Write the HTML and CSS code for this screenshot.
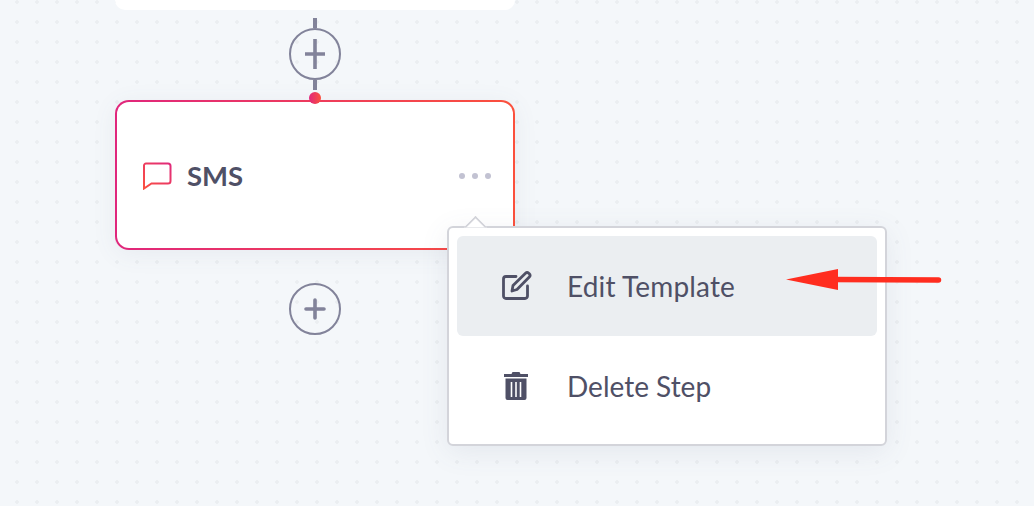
FILE: index.html
```html
<!DOCTYPE html>
<html lang="en">

<head>
  <meta charset="UTF-8" />
  <title>Workflow</title>
  <link rel="stylesheet" href="styles.css">
</head>

<body>
  <div class="canvas">
    <div class="flow">
      <div class="node-stub"></div>
      <div class="edge edge-top"></div>
      <button class="add-btn add-btn-long" type="button">
        <svg width="32" height="32" viewBox="0 0 32 32">
          <path d="M16 1v30M6 16h20" fill="none" stroke="#82839a" stroke-width="3.6" />
        </svg>
      </button>
      <div class="edge edge-bottom"></div>
      <div class="node">
        <span class="node-dot"></span>
        <svg class="sms-icon" width="30" height="28" viewBox="0 0 30 28">
          <defs>
            <linearGradient id="sms-grad" x1="1" y1="0" x2="0" y2="1">
              <stop offset="0" stop-color="#e02a7c" />
              <stop offset="1" stop-color="#fb5040" />
            </linearGradient>
          </defs>
          <path d="M3 1.500h22a2.500 2.500 0 0 1 2.500 2.500v15a2.500 2.500 0 0 1-2.500 2.500H8.500L1 26.500V3.500a2 2 0 0 1 2-2z" fill="none" stroke="url(#sms-grad)" stroke-width="2" />
        </svg>
        <span class="node-title">SMS</span>
        <span class="node-menu"><i></i><i></i><i></i></span>
      </div>
      <button class="add-btn add-btn-next" type="button">
        <svg width="22" height="22" viewBox="0 0 22 22">
          <path d="M11 2v18M2 11h18" fill="none" stroke="#82839a" stroke-width="3.6" stroke-linecap="round" />
        </svg>
      </button>
    </div>

    <div class="menu">
      <div class="menu-item menu-item-active">
        <svg width="32" height="32" viewBox="0 0 32 32">
          <path d="M16 6.500H6a2.500 2.500 0 0 0-2.500 2.500v17a2.500 2.500 0 0 0 2.500 2.500h19a2.500 2.500 0 0 0 2.500-2.500V16" fill="none" stroke="#4f5066" stroke-width="2.800" stroke-linecap="round" />
          <path d="M12 21l1-5.500L25.500 3.200a2.300 2.300 0 0 1 3.200 0l.6.6a2.300 2.300 0 0 1 0 3.200L17 19.500z" fill="none" stroke="#4f5066" stroke-width="2.800" stroke-linejoin="round" />
        </svg>
        <span>Edit Template</span>
      </div>
      <div class="menu-item menu-item-plain">
        <svg width="32" height="32" viewBox="0 0 32 32">
          <path d="M4 4h7.500l1-2h7l1 2H28v3H4z" fill="#4f5066" />
          <path fill-rule="evenodd" d="M5.500 8.500h21V28a2 2 0 0 1-2 2h-17a2 2 0 0 1-2-2zM10.700 12v15h1.600V12zM15.200 12v15h1.600V12zM19.700 12v15h1.600V12z" fill="#4f5066" />
        </svg>
        <span>Delete Step</span>
      </div>
    </div>

    <svg class="arrow" width="158" height="26" viewBox="0 0 158 26">
      <path d="M48 11.500 L153.500 12" fill="none" stroke="#ff2d1f" stroke-width="5.500" stroke-linecap="round" />
      <path d="M1 11.500 L53 1 V22z" fill="#ff2d1f" />
    </svg>
  </div>
</body>

</html>
```

FILE: styles.css
```css
* {
  box-sizing: border-box;
}

html,
body {
  margin: 0;
  height: 100%;
  overflow: hidden;
}

body {
  font-family: Lato, Arial, sans-serif;
  color: #4f5066;
  background-color: #f4f7fa;
}

.canvas {
  position: relative;
  width: 1034px;
  height: 506px;
  background-image: radial-gradient(circle, #ebeef1 1.5px, transparent 2px);
  background-size: 20px 20px;
  background-position: 7px -8px;
}

.flow {
  display: flex;
  flex-direction: column;
  align-items: center;
  width: 400px;
  margin-left: 115px;
}

.node-stub {
  width: 100%;
  height: 10px;
  background: #fff;
  border-radius: 0 0 12px 12px;
}

.edge {
  width: 4px;
  height: 10px;
  background: #82839a;
}

.edge-top {
  margin-top: 8px;
}

.add-btn {
  display: flex;
  align-items: center;
  justify-content: center;
  width: 52px;
  height: 52px;
  padding: 0;
  border: 2px solid #82839a;
  border-radius: 50%;
  background: transparent;
}

.add-btn-next {
  margin-top: 33px;
}

.node {
  position: relative;
  display: flex;
  align-items: center;
  width: 100%;
  height: 150px;
  margin-top: 10px;
  padding: 1px 22px 0 26px;
  border: 2px solid transparent;
  border-radius: 14px;
  background: linear-gradient(#fff, #fff) padding-box, linear-gradient(90deg, #e0267c, #fb503c) border-box;
  box-shadow: 0 4px 24px rgba(90, 100, 130, 0.08);
}

.node-dot {
  position: absolute;
  top: -10px;
  left: 192px;
  width: 12px;
  height: 12px;
  border-radius: 50%;
  background: linear-gradient(90deg, #e0267c, #fb503c);
}

.sms-icon {
  flex: none;
}

.node-title {
  margin-left: 14px;
  font-size: 27.5px;
  font-weight: 700;
}

.node-menu {
  display: flex;
  gap: 7px;
  margin-left: auto;
}

.node-menu i {
  width: 6px;
  height: 6px;
  border-radius: 50%;
  background: #c2c2d2;
}

.menu {
  position: absolute;
  top: 226px;
  left: 447px;
  width: 440px;
  padding: 8px;
  border: 2px solid #d3d4da;
  border-radius: 6px;
  background: #fff;
  box-shadow: 0 6px 28px rgba(90, 100, 130, 0.1);
}

.menu::before {
  content: "";
  position: absolute;
  top: -9px;
  left: 18px;
  width: 15px;
  height: 15px;
  border-top: 2px solid #d3d4da;
  border-left: 2px solid #d3d4da;
  background: #fff;
  transform: rotate(45deg);
  clip-path: polygon(0 0, 100% 0, 0 100%);
}

.menu-item {
  display: flex;
  align-items: center;
  height: 100px;
  padding-left: 43px;
  border-radius: 6px;
  font-size: 28px;
}

.menu-item span {
  margin-left: 35px;
  letter-spacing: 0.15px;
}

.menu-item-plain span {
  letter-spacing: 0;
}

.menu-item-active {
  background: #ebeef1;
}

.arrow {
  position: absolute;
  top: 268px;
  left: 785px;
}
```
